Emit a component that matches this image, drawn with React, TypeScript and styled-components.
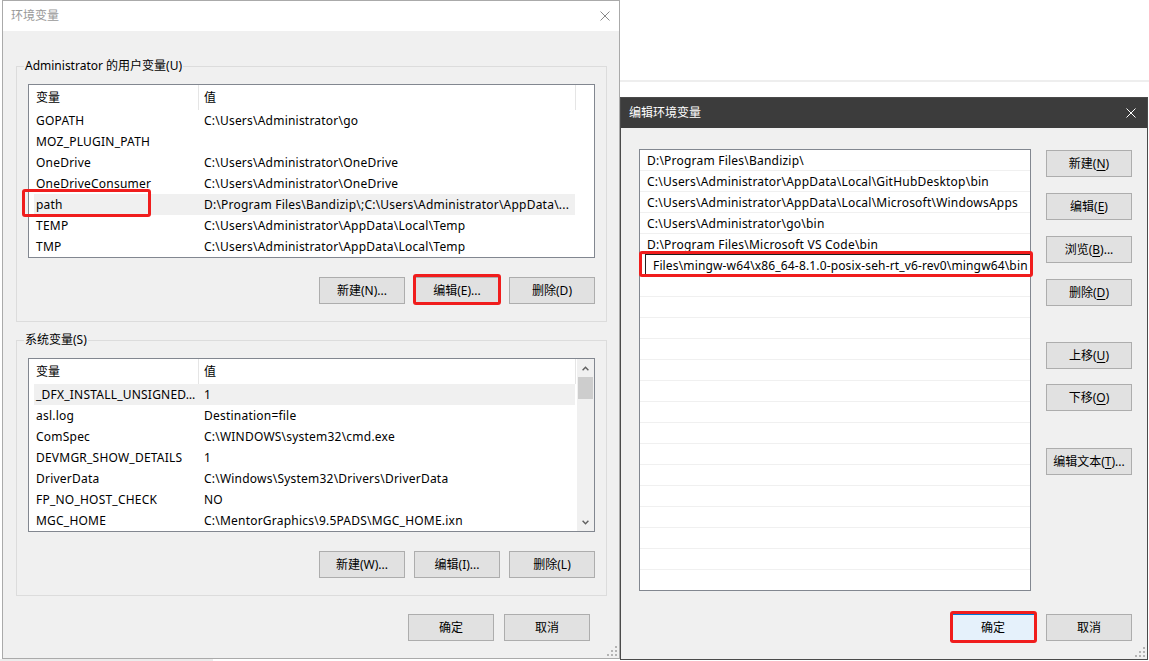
import React from 'react';
import styled, { createGlobalStyle } from 'styled-components';

const FONT = `"Noto Sans", "Noto Sans CJK SC", sans-serif`;
const LATIN_SPACING = '0.22px';

const GlobalStyle = createGlobalStyle`
  * { box-sizing: border-box; }
  html, body { margin: 0; padding: 0; background: #ffffff; }
  body { font-family: ${FONT}; font-size: 12px; color: #000; overflow: hidden; }
`;

const Desktop = styled.div`
  position: relative;
  width: 1149px;
  height: 661px;
  overflow: hidden;
  background: #ffffff;
`;

const BackWindow = styled.div`
  position: absolute;
  left: 620px;
  top: 0;
  width: 529px;
  height: 82px;
  background: #ffffff;
  border-bottom: 2px solid #eeeeee;
`;

const BackStrip = styled.div`
  position: absolute;
  left: 0;
  top: 659px;
  width: 213px;
  height: 2px;
  background: #ececec;
`;

/* ---------- left window ---------- */
const EnvWindow = styled.div`
  position: absolute;
  left: 2px;
  top: 0;
  width: 618px;
  height: 659px;
  border: 1px solid #aaaaaa;
  background: #f0f0f0;
  display: flex;
  flex-direction: column;
`;

const TitleBar = styled.div<{ $dark?: boolean }>`
  height: 30px;
  flex: none;
  display: flex;
  align-items: center;
  justify-content: space-between;
  padding: 0 ${p => (p.$dark ? 11 : 9)}px 0 8px;
  background: ${p => (p.$dark ? '#3c3c3c' : '#ffffff')};
  color: ${p => (p.$dark ? '#ffffff' : '#999999')};
  font-size: 12px;
  line-height: 16px;
`;

const WindowBody = styled.div`
  flex: 1;
  display: flex;
  flex-direction: column;
  padding: 27px 12px 0 13px;
`;

const GroupBox = styled.fieldset<{ $gap?: number }>`
  margin: ${p => p.$gap ?? 0}px 0 0 0;
  padding: 0;
  min-width: 0;
  border: 1px solid #dcdcdc;
`;

const GroupLegend = styled.legend`
  margin-left: 7px;
  padding: 0 1px;
  line-height: 16px;
  font-size: 12px;
  color: #000;
`;

const GroupContent = styled.div`
  display: flex;
  flex-direction: column;
  padding: 10px 11px 17px 11px;
`;

const ListBox = styled.div`
  height: 174px;
  border: 1px solid #828790;
  background: #ffffff;
  display: flex;
  justify-content: space-between;
`;

const ListColumns = styled.div`
  width: 548px;
  display: flex;
  flex-direction: column;
`;

const HeaderRow = styled.div`
  height: 25px;
  display: flex;
`;

const HeaderCell = styled.div<{ $w: number; $pad: number }>`
  width: ${p => p.$w}px;
  padding-left: ${p => p.$pad}px;
  border-right: 1px solid #e5e5e5;
  line-height: 25px;
  white-space: nowrap;
`;

const VarRow = styled.div<{ $selected?: boolean }>`
  position: relative;
  height: 21px;
  width: 541px;
  margin-left: 5px;
  display: flex;
  background: ${p => (p.$selected ? '#f0f0f0' : 'transparent')};
  line-height: 21px;
  white-space: nowrap;
  letter-spacing: ${LATIN_SPACING};
`;

const NameCell = styled.div`
  width: 164px;
  padding: 0 2px;
  overflow: hidden;
  text-overflow: ellipsis;
`;

const ValueCell = styled.div`
  flex: 1;
  min-width: 0;
  padding-left: 6px;
  overflow: hidden;
  text-overflow: ellipsis;
`;

const ScrollBar = styled.div`
  width: 17px;
  background: #f0f0f0;
  display: flex;
  flex-direction: column;
`;

const ScrollArrow = styled.div`
  height: 18px;
  display: flex;
  align-items: center;
  justify-content: center;
`;

const ScrollThumb = styled.div`
  height: 22px;
  margin: 0 1px;
  background: #cdcdcd;
`;

const ScrollTrack = styled.div`
  flex: 1;
`;

const ButtonRow = styled.div<{ $top: number; $right?: number; $gap: number }>`
  display: flex;
  justify-content: flex-end;
  gap: ${p => p.$gap}px;
  margin-top: ${p => p.$top}px;
  padding-right: ${p => p.$right ?? 0}px;
`;

const WinButton = styled.div<{ $focused?: boolean }>`
  position: relative;
  width: 86px;
  height: 27px;
  flex: none;
  display: flex;
  align-items: center;
  justify-content: center;
  border: 1px solid ${p => (p.$focused ? '#0078d7' : '#adadad')};
  background: ${p => (p.$focused ? '#e5f1fb' : '#e1e1e1')};
  font-size: 12px;
  line-height: 16px;
  color: #000;
  white-space: nowrap;

  u {
    text-underline-offset: 2px;
  }
`;

const Callout = styled.span<{ $t: number; $l: number; $r: number; $b: number }>`
  position: absolute;
  top: ${p => p.$t}px;
  left: ${p => p.$l}px;
  right: ${p => p.$r}px;
  bottom: ${p => p.$b}px;
  border: 3px solid #f01d1d;
  border-radius: 3px;
  pointer-events: none;
  z-index: 2;
`;

const PathCallout = styled.span`
  position: absolute;
  top: -5px;
  left: -12px;
  width: 129px;
  height: 28px;
  border: 3px solid #f01d1d;
  border-radius: 3px;
  pointer-events: none;
`;

const Grip = styled.svg`
  position: absolute;
  right: 2px;
  bottom: 2px;
`;

/* ---------- right dialog ---------- */
const EditDialog = styled.div`
  position: absolute;
  left: 620px;
  top: 97px;
  width: 528px;
  height: 563px;
  border: 1px solid #4a4a4a;
  background: #f0f0f0;
  display: flex;
  flex-direction: column;
`;

const EditBody = styled.div`
  flex: 1;
  display: flex;
  flex-direction: column;
  padding: 21px 15px 0 18px;
`;

const EditTop = styled.div`
  display: flex;
  gap: 15px;
`;

const PathList = styled.div`
  width: 392px;
  height: 442px;
  border: 1px solid #828790;
  background: #ffffff;
  display: flex;
  flex-direction: column;
`;

const PathRow = styled.div`
  position: relative;
  height: 21px;
  flex: none;
  display: flex;
  padding-left: 7px;
  border-bottom: 1px solid #f0f0f0;
  line-height: 21px;
  white-space: nowrap;
  letter-spacing: ${LATIN_SPACING};

  &:last-child {
    height: 20px;
    border-bottom: none;
  }
`;

const EditRow = styled.div`
  position: relative;
  height: 21px;
  flex: none;
  display: flex;
  border-bottom: 1px solid #f0f0f0;
`;

const EditField = styled.div`
  flex: 1;
  margin: -1px 0 -1px 5px;
  border: 1px solid #202020;
  border-right: none;
  background: #ffffff;
  padding-left: 7px;
  line-height: 21px;
  white-space: nowrap;
  overflow: hidden;
  letter-spacing: 0.15px;
`;

const SideColumn = styled.div`
  display: flex;
  flex-direction: column;
  padding-top: 1px;
`;

const SideGroup = styled.div<{ $top: number; $gap: number }>`
  display: flex;
  flex-direction: column;
  gap: ${p => p.$gap}px;
  margin-top: ${p => p.$top}px;
`;

const CloseX = ({ color }: { color: string }) => (
  <svg width="10" height="10" viewBox="0 0 10 10">
    <path d="M0.5 0.5 L9.5 9.5 M9.5 0.5 L0.5 9.5" stroke={color} strokeWidth="1" fill="none" />
  </svg>
);

const GripIcon = () => (
  <Grip width="10" height="10" viewBox="0 0 10 10">
    {[
      [8, 0],
      [4, 4],
      [8, 4],
      [0, 8],
      [4, 8],
      [8, 8],
    ].map(([x, y]) => (
      <rect key={`${x}-${y}`} x={x} y={y} width="2" height="2" fill="#b4b4b4" />
    ))}
  </Grip>
);

const Chevron = ({ up }: { up?: boolean }) => (
  <svg width="7" height="5" viewBox="0 0 7 5">
    <path
      d={up ? 'M0.6 4.2 L3.5 1.2 L6.4 4.2' : 'M0.6 0.8 L3.5 3.8 L6.4 0.8'}
      stroke="#606060"
      strokeWidth="1.4"
      fill="none"
    />
  </svg>
);

type Pair = [string, string];

const userVars: Pair[] = [
  ['GOPATH', 'C:\\Users\\Administrator\\go'],
  ['MOZ_PLUGIN_PATH', ''],
  ['OneDrive', 'C:\\Users\\Administrator\\OneDrive'],
  ['OneDriveConsumer', 'C:\\Users\\Administrator\\OneDrive'],
  ['path', 'D:\\Program Files\\Bandizip\\;C:\\Users\\Administrator\\AppData\\...'],
  ['TEMP', 'C:\\Users\\Administrator\\AppData\\Local\\Temp'],
  ['TMP', 'C:\\Users\\Administrator\\AppData\\Local\\Temp'],
];

const sysVars: Pair[] = [
  ['_DFX_INSTALL_UNSIGNED...', '1'],
  ['asl.log', 'Destination=file'],
  ['ComSpec', 'C:\\WINDOWS\\system32\\cmd.exe'],
  ['DEVMGR_SHOW_DETAILS', '1'],
  ['DriverData', 'C:\\Windows\\System32\\Drivers\\DriverData'],
  ['FP_NO_HOST_CHECK', 'NO'],
  ['MGC_HOME', 'C:\\MentorGraphics\\9.5PADS\\MGC_HOME.ixn'],
];

const paths = [
  'D:\\Program Files\\Bandizip\\',
  'C:\\Users\\Administrator\\AppData\\Local\\GitHubDesktop\\bin',
  'C:\\Users\\Administrator\\AppData\\Local\\Microsoft\\WindowsApps',
  'C:\\Users\\Administrator\\go\\bin',
  'D:\\Program Files\\Microsoft VS Code\\bin',
];

const editingText = 'Files\\mingw-w64\\x86_64-8.1.0-posix-seh-rt_v6-rev0\\mingw64\\bin';

const VarList = ({
  rows,
  selected,
  scroll,
  marked,
}: {
  rows: Pair[];
  selected: number;
  scroll?: boolean;
  marked?: boolean;
}) => (
  <ListBox>
    <ListColumns>
      <HeaderRow>
        <HeaderCell $w={170} $pad={7}>变量</HeaderCell>
        <HeaderCell $w={377} $pad={5}>值</HeaderCell>
      </HeaderRow>
      {rows.map(([name, value], i) => (
        <VarRow key={name} $selected={i === selected}>
          <NameCell>{name}</NameCell>
          <ValueCell>{value}</ValueCell>
          {marked && i === selected && <PathCallout />}
        </VarRow>
      ))}
    </ListColumns>
    {scroll && (
      <ScrollBar>
        <ScrollArrow>
          <Chevron up />
        </ScrollArrow>
        <ScrollThumb />
        <ScrollTrack />
        <ScrollArrow>
          <Chevron />
        </ScrollArrow>
      </ScrollBar>
    )}
  </ListBox>
);

const EMPTY_ROWS = 15;

export default function App() {
  return (
    <Desktop>
      <GlobalStyle />
      <BackWindow />
      <BackStrip />

      <EnvWindow>
        <TitleBar>
          <span>环境变量</span>
          <CloseX color="#8a8a8a" />
        </TitleBar>
        <WindowBody>
          <GroupBox>
            <GroupLegend>Administrator 的用户变量(U)</GroupLegend>
            <GroupContent>
              <VarList rows={userVars} selected={4} marked />
              <ButtonRow $top={19} $gap={9}>
                <WinButton>新建(N)...</WinButton>
                <WinButton>
                  编辑(E)...
                  <Callout $t={-4} $l={-2} $r={-2} $b={-2} />
                </WinButton>
                <WinButton>删除(D)</WinButton>
              </ButtonRow>
            </GroupContent>
          </GroupBox>

          <GroupBox $gap={10}>
            <GroupLegend>系统变量(S)</GroupLegend>
            <GroupContent>
              <VarList rows={sysVars} selected={0} scroll />
              <ButtonRow $top={19} $gap={9}>
                <WinButton>新建(W)...</WinButton>
                <WinButton>编辑(I)...</WinButton>
                <WinButton>删除(L)</WinButton>
              </ButtonRow>
            </GroupContent>
          </GroupBox>

          <ButtonRow $top={18} $gap={10} $right={17}>
            <WinButton>确定</WinButton>
            <WinButton>取消</WinButton>
          </ButtonRow>
        </WindowBody>
        <GripIcon />
      </EnvWindow>

      <EditDialog>
        <TitleBar $dark>
          <span>编辑环境变量</span>
          <CloseX color="#ffffff" />
        </TitleBar>
        <EditBody>
          <EditTop>
            <PathList>
              {paths.map(p => (
                <PathRow key={p}>{p}</PathRow>
              ))}
              <EditRow>
                <EditField>{editingText}</EditField>
                <Callout $t={-4} $l={-1} $r={-3} $b={-2} />
              </EditRow>
              {Array.from({ length: EMPTY_ROWS }).map((_, i) => (
                <PathRow key={`empty-${i}`} />
              ))}
            </PathList>
            <SideColumn>
              <SideGroup $top={0} $gap={16}>
                <WinButton>
                  新建(<u>N</u>)
                </WinButton>
                <WinButton>
                  编辑(<u>E</u>)
                </WinButton>
                <WinButton>
                  浏览(<u>B</u>)...
                </WinButton>
                <WinButton>
                  删除(<u>D</u>)
                </WinButton>
              </SideGroup>
              <SideGroup $top={36} $gap={15}>
                <WinButton>
                  上移(<u>U</u>)
                </WinButton>
                <WinButton>
                  下移(<u>O</u>)
                </WinButton>
              </SideGroup>
              <SideGroup $top={37} $gap={0}>
                <WinButton>
                  编辑文本(<u>T</u>)...
                </WinButton>
              </SideGroup>
            </SideColumn>
          </EditTop>
          <ButtonRow $top={23} $gap={10}>
            <WinButton $focused>
              确定
              <Callout $t={-4} $l={-1} $r={-2} $b={-3} />
            </WinButton>
            <WinButton>取消</WinButton>
          </ButtonRow>
        </EditBody>
        <GripIcon />
      </EditDialog>
    </Desktop>
  );
}
